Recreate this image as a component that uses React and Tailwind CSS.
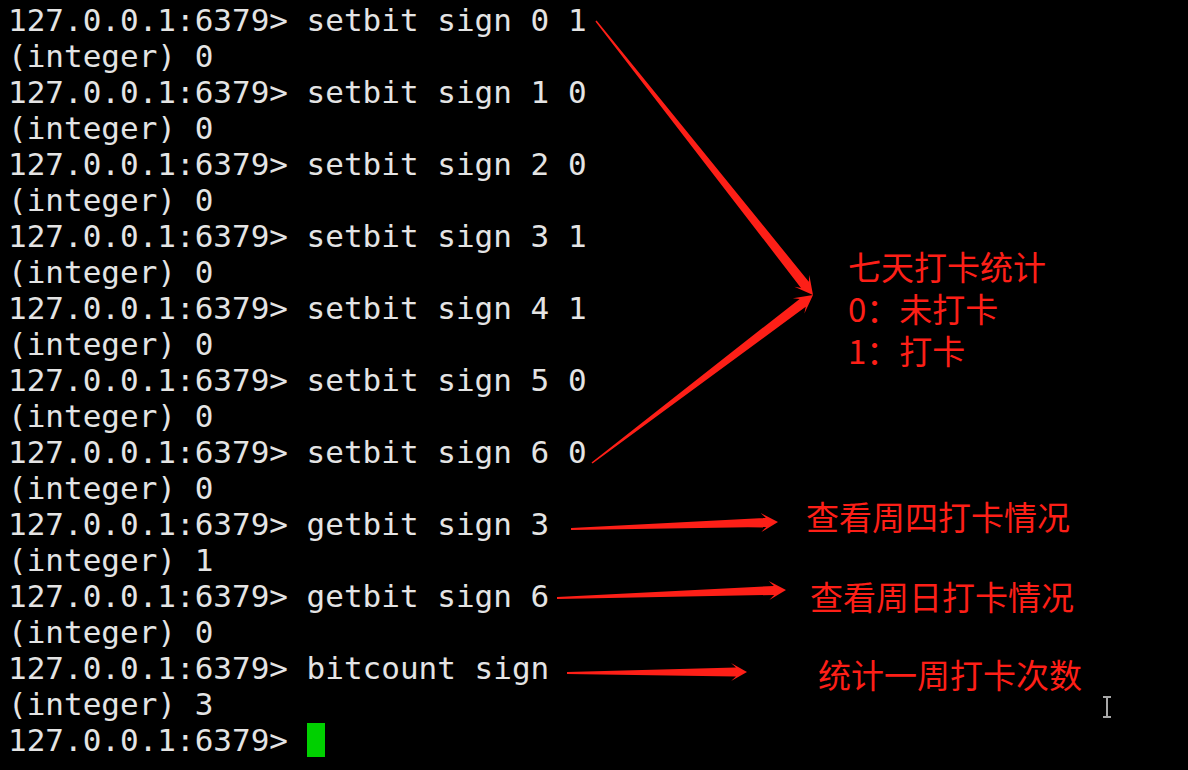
import React from "react";

function arrowPoints(x0, y0, x1, y1, w0, w1, hl, hw, notch) {
  const dx = x1 - x0;
  const dy = y1 - y0;
  const L = Math.hypot(dx, dy);
  const ux = dx / L;
  const uy = dy / L;
  const nx = -uy;
  const ny = ux;
  const pts = [
    [0, -w0 / 2],
    [L - hl + notch, -w1 / 2],
    [L - hl, -hw / 2],
    [L, 0],
    [L - hl, hw / 2],
    [L - hl + notch, w1 / 2],
    [0, w0 / 2],
  ];
  return pts
    .map(([u, v]) => `${(x0 + u * ux + v * nx).toFixed(1)},${(y0 + u * uy + v * ny).toFixed(1)}`)
    .join(" ");
}

const arrows = [
  [596, 21, 813, 295, 1.5, 10, 18, 19, 5],
  [592, 463, 813, 295, 1.5, 10, 18, 19, 5],
  [571, 529, 778, 522, 2, 9, 17, 19, 5],
  [557, 598, 786, 590, 2, 9, 17, 19, 5],
  [567, 673, 747, 672, 2, 9, 16, 18, 5],
];

const lines = [
  "127.0.0.1:6379> setbit sign 0 1",
  "(integer) 0",
  "127.0.0.1:6379> setbit sign 1 0",
  "(integer) 0",
  "127.0.0.1:6379> setbit sign 2 0",
  "(integer) 0",
  "127.0.0.1:6379> setbit sign 3 1",
  "(integer) 0",
  "127.0.0.1:6379> setbit sign 4 1",
  "(integer) 0",
  "127.0.0.1:6379> setbit sign 5 0",
  "(integer) 0",
  "127.0.0.1:6379> setbit sign 6 0",
  "(integer) 0",
  "127.0.0.1:6379> getbit sign 3",
  "(integer) 1",
  "127.0.0.1:6379> getbit sign 6",
  "(integer) 0",
  "127.0.0.1:6379> bitcount sign",
  "(integer) 3",
];

const note = "font-['Noto_Sans_CJK_SC',sans-serif] text-[33px] leading-none text-[#fd1f17] whitespace-nowrap";

export default function App() {
  return (
    <div className="relative w-[1188px] h-[770px] overflow-hidden bg-black">
      <div className="pt-[2px] pl-[8px] font-['DejaVu_Sans_Mono',monospace] text-[31px] leading-[36px] text-[#e4e4e4] whitespace-pre">
        {lines.map((l, i) => (
          <div key={i} className="h-[36px]">
            {l}
          </div>
        ))}
        <div className="flex h-[36px] items-center">
          <span>127.0.0.1:6379&gt; </span>
          <span className="inline-block h-[34px] w-[18px] bg-[#00d000]" />
        </div>
      </div>

      <svg className="absolute left-0 top-0" width="1188" height="770" viewBox="0 0 1188 770">
        {arrows.map((a, i) => (
          <polygon key={i} points={arrowPoints(...a)} fill="#fd1f17" />
        ))}
        <g stroke="#a8a8a8" strokeWidth="2" fill="none">
          <line x1="1107" y1="697" x2="1107" y2="717" />
          <line x1="1103" y1="697" x2="1111" y2="697" />
          <line x1="1103" y1="717" x2="1111" y2="717" />
        </g>
      </svg>

      <div className={`absolute left-[848px] top-[250px] flex flex-col gap-[9px] ${note}`}>
        <div>七天打卡统计</div>
        <div>0：未打卡</div>
        <div>1：打卡</div>
      </div>
      <div className={`absolute left-[806px] top-[500px] ${note}`}>查看周四打卡情况</div>
      <div className={`absolute left-[810px] top-[580px] ${note}`}>查看周日打卡情况</div>
      <div className={`absolute left-[818px] top-[658px] ${note}`}>统计一周打卡次数</div>
    </div>
  );
}
